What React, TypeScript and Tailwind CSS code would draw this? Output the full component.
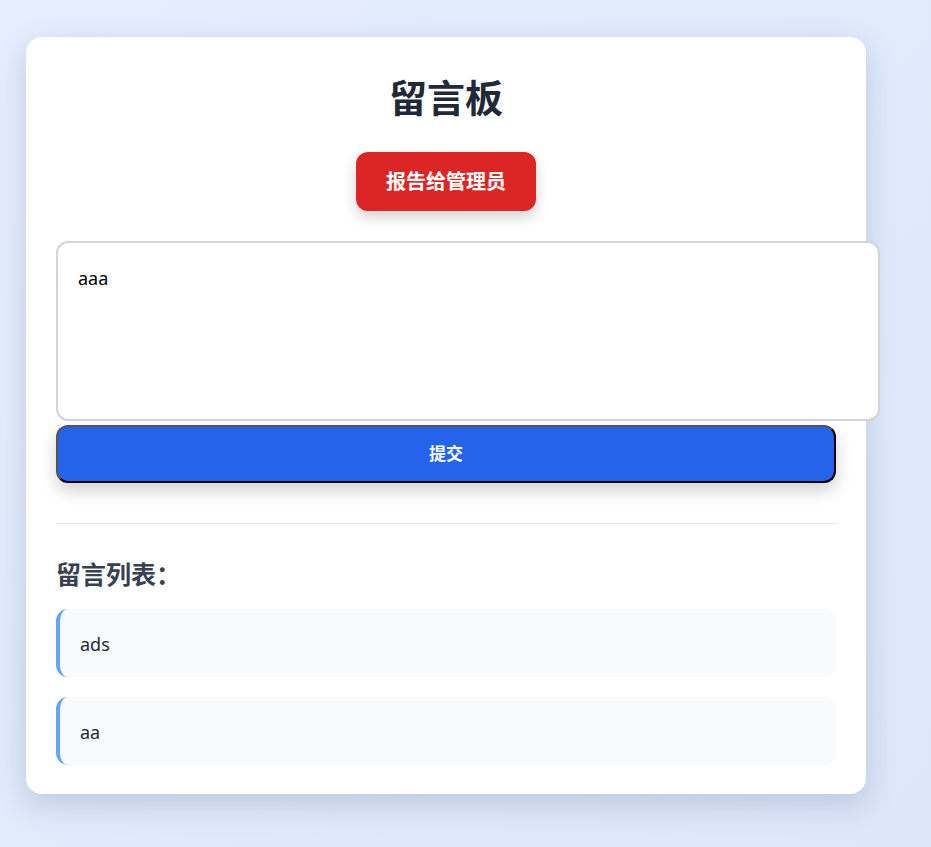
import { useState } from "react";

const font = { fontFamily: '"Noto Sans", "Noto Sans CJK SC", sans-serif' };

export default function App() {
  const [text, setText] = useState("aaa");
  const [messages] = useState<string[]>(["ads", "aa"]);

  return (
    <div
      className="min-h-[847px] w-full bg-gradient-to-br from-[#e6eefd] to-[#dce7fa] pt-[37px] pl-[26px] pb-[53px]"
      style={font}
    >
      <div className="w-[840px] rounded-[16px] bg-white px-[30px] pt-[30px] pb-[29px] shadow-[0_10px_30px_rgba(60,80,120,0.22)]">
        {/* Title */}
        <h1 className="mt-[8px] text-center text-[38px] leading-[44px] font-bold text-[#1f2937]">
          留言板
        </h1>

        {/* Report button */}
        <div className="mt-[33px] flex justify-center">
          <button className="h-[59px] w-[180px] rounded-[12px] bg-[#dc2626] text-[20px] font-bold text-white shadow-[0_6px_14px_rgba(0,0,0,0.18)]">
            报告给管理员
          </button>
        </div>

        {/* Input */}
        <textarea
          value={text}
          onChange={(e) => setText(e.target.value)}
          className="mt-[30px] block h-[180px] w-[824px] resize-none rounded-[12px] border-2 border-[#d1d5db] bg-white px-[20px] py-[20px] text-[18px] leading-[30px] text-black outline-none"
          style={font}
        />
        <button className="mt-[4px] block h-[58px] w-full rounded-[12px] border-2 border-t-[#555] border-l-[#555] border-r-black border-b-black bg-[#2563eb] text-[17px] font-bold text-white shadow-[0_8px_16px_rgba(0,0,0,0.18)]">
          提交
        </button>

        <hr className="mt-[40px] border-0 border-t border-[#e5e7eb]" />

        {/* Message list */}
        <h2 className="mt-[34px] text-[25px] leading-[32px] font-bold text-[#374151]">
          留言列表：
        </h2>
        <div className="mt-[19px] flex flex-col gap-[20px]">
          {messages.map((m, i) => (
            <div
              key={i}
              className="rounded-[12px] border-l-4 border-[#60a5fa] bg-[#f8fafc] px-[20px] pt-[21px] pb-[19px] text-[18px] leading-[28px] text-[#1f2937]"
            >
              {m}
            </div>
          ))}
        </div>
      </div>
    </div>
  );
}
